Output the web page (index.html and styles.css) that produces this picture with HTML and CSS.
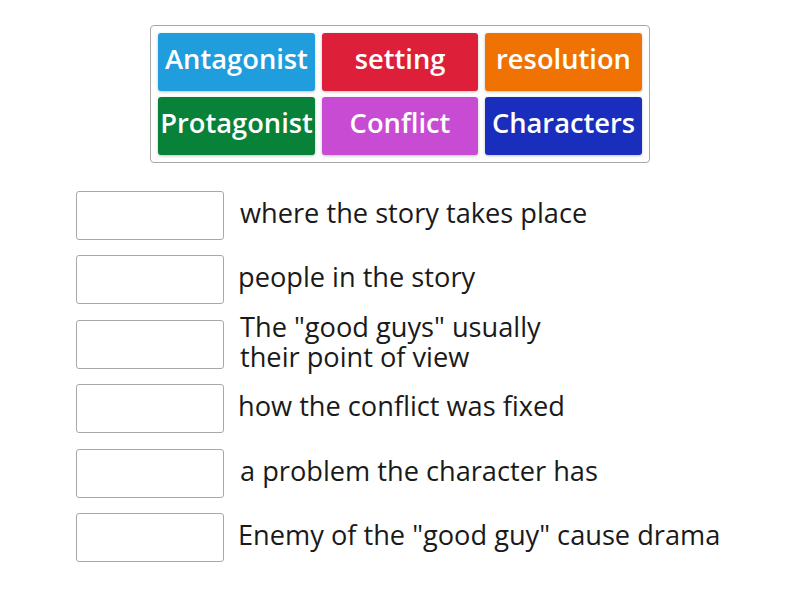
FILE: index.html
```html
<!DOCTYPE html>
<html>
<head>
<meta charset="utf-8">
<link rel="stylesheet" href="styles.css">
</head>
<body>
<div class="page">
  <div class="bank">
    <div class="tile blue">Antagonist</div>
    <div class="tile red">setting</div>
    <div class="tile orange">resolution</div>
    <div class="tile green">Protagonist</div>
    <div class="tile purple">Conflict</div>
    <div class="tile navy">Characters</div>
  </div>
  <div class="rows">
    <div class="row"><div class="slot"></div><div class="clue first">where the story takes place</div></div>
    <div class="row"><div class="slot"></div><div class="clue">people in the story</div></div>
    <div class="row"><div class="slot"></div><div class="clue first">The "good guys" usually<br>their point of view</div></div>
    <div class="row"><div class="slot"></div><div class="clue">how the conflict was fixed</div></div>
    <div class="row"><div class="slot"></div><div class="clue first">a problem the character has</div></div>
    <div class="row"><div class="slot"></div><div class="clue">Enemy of the "good guy" cause drama</div></div>
  </div>
</div>
</body>
</html>
```
FILE: styles.css
```css
html, body {
  margin: 0;
  padding: 0;
  background: #ffffff;
}
body {
  font-family: "Open Sans", "Liberation Sans", sans-serif;
  width: 800px;
  height: 600px;
  overflow: hidden;
}
.page {
  padding-top: 25px;
}
.bank {
  width: 484px;
  margin: 0 auto;
  border: 1px solid #a8a8a8;
  border-radius: 4px;
  padding: 7px;
  display: grid;
  grid-template-columns: 157px 156px 157px;
  grid-auto-rows: 58px;
  column-gap: 7px;
  row-gap: 6px;
}
.tile {
  color: #ffffff;
  font-weight: 600;
  font-size: 27.3px;
  display: flex;
  align-items: center;
  justify-content: center;
  padding-bottom: 7px;
  box-sizing: border-box;
  border-radius: 3px;
  box-shadow: 0 1px 3px rgba(0,0,0,0.25);
  white-space: nowrap;
}
.blue { background: #1f9ddd; }
.red { background: #de1f3a; }
.orange { background: #f07203; }
.green { background: #088139; }
.purple { background: #c74cd3; }
.navy { background: #1a2ebd; }
.rows {
  margin-top: 28px;
  padding-left: 76px;
  display: flex;
  flex-direction: column;
  gap: 16.5px;
}
.row {
  display: flex;
  align-items: center;
  height: 48px;
}
.slot {
  width: 146px;
  height: 47px;
  border: 1px solid #a8a8a8;
  border-radius: 3px;
  flex: none;
}
.clue {
  margin-left: 14px;
  font-size: 27.2px;
  line-height: 30px;
  color: #1a1a1a;
  padding-bottom: 5px;
}
.clue.first {
  margin-left: 16px;
}
```
